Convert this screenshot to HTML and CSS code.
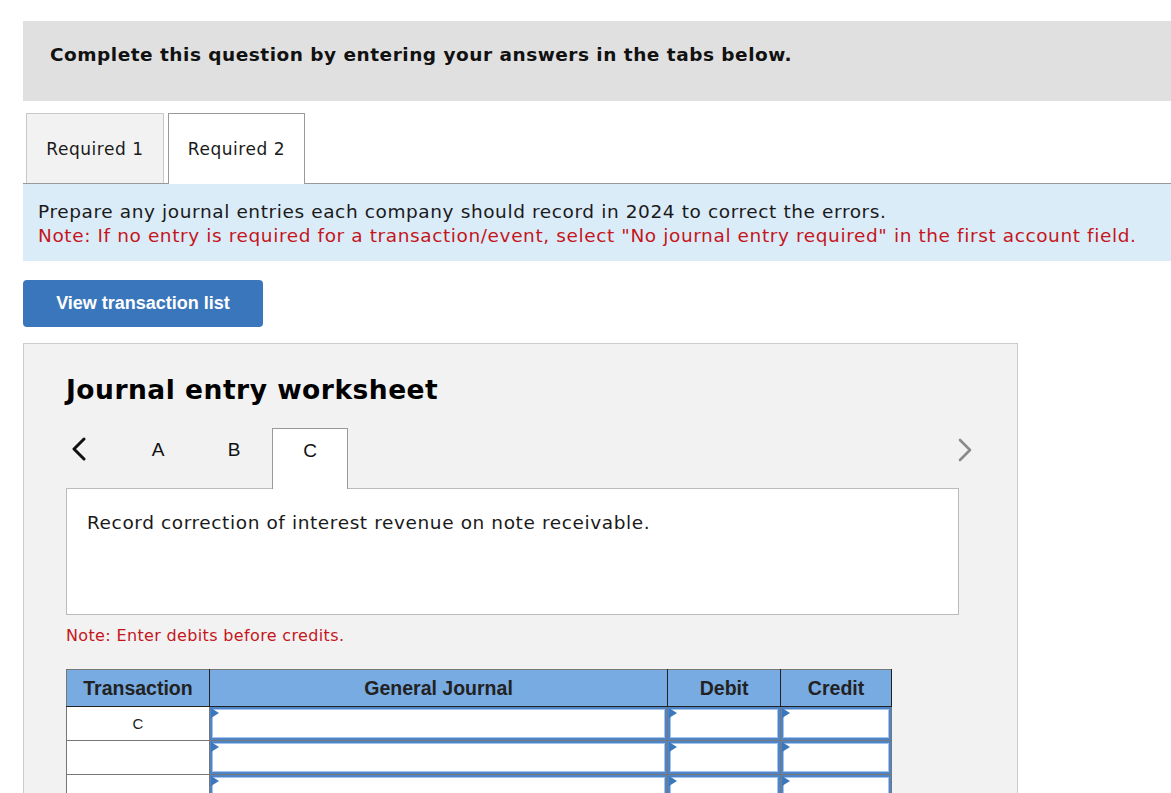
FILE: index.html
```
<!DOCTYPE html>
<html lang="en">
<head>
    <meta charset="UTF-8">
    <title>Journal entry worksheet</title>
    <link rel="stylesheet" href="styles.css">
</head>
<body>
    <div class="page">
        <div class="question-header">Complete this question by entering your answers in the tabs below.</div>

        <div class="req-tabs">
            <div class="req-tab">Required 1</div>
            <div class="req-tab active">Required 2</div>
        </div>

        <div class="instructions">
            <p>Prepare any journal entries each company should record in 2024 to correct the errors.</p>
            <p class="note">Note: If no entry is required for a transaction/event, select "No journal entry required" in the first account field.</p>
        </div>

        <button class="list-button">View transaction list</button>

        <div class="worksheet">
            <h2>Journal entry worksheet</h2>

            <div class="entry-nav">
                <div class="nav-prev">
                    <svg width="15" height="24" viewBox="0 0 15 24"><path d="M13 2 L3 12 L13 22" fill="none" stroke="#111" stroke-width="3" stroke-linecap="round" stroke-linejoin="round"/></svg>
                </div>
                <div class="entry-tab">A</div>
                <div class="entry-tab">B</div>
                <div class="entry-tab active">C</div>
                <div class="nav-next">
                    <svg width="15" height="24" viewBox="0 0 15 24"><path d="M2 2 L12 12 L2 22" fill="none" stroke="#8a8a8a" stroke-width="2.6" stroke-linecap="round" stroke-linejoin="round"/></svg>
                </div>
            </div>

            <div class="entry-box">Record correction of interest revenue on note receivable.</div>

            <p class="debit-note">Note: Enter debits before credits.</p>

            <table class="journal">
                <thead>
                    <tr>
                        <th class="col-trans">Transaction</th>
                        <th class="col-account">General Journal</th>
                        <th class="col-debit">Debit</th>
                        <th class="col-credit">Credit</th>
                    </tr>
                </thead>
                <tbody>
                    <tr>
                        <td class="trans">C</td>
                        <td class="field"><div class="input"></div></td>
                        <td class="field"><div class="input"></div></td>
                        <td class="field"><div class="input"></div></td>
                    </tr>
                    <tr>
                        <td class="trans"></td>
                        <td class="field"><div class="input"></div></td>
                        <td class="field"><div class="input"></div></td>
                        <td class="field"><div class="input"></div></td>
                    </tr>
                    <tr>
                        <td class="trans"></td>
                        <td class="field"><div class="input"></div></td>
                        <td class="field"><div class="input"></div></td>
                        <td class="field"><div class="input"></div></td>
                    </tr>
                    <tr>
                        <td class="trans"></td>
                        <td class="field"><div class="input"></div></td>
                        <td class="field"><div class="input"></div></td>
                        <td class="field"><div class="input"></div></td>
                    </tr>
                </tbody>
            </table>
        </div>
    </div>
</body>
</html>
```

FILE: styles.css
```
* {
    margin: 0;
    padding: 0;
    box-sizing: border-box;
}

body {
    font-family: 'DejaVu Sans', Verdana, sans-serif;
    color: #1a1a1a;
    background-color: white;
    overflow: hidden;
}

.page {
    padding: 21px 0 0 23px;
}

.question-header {
    height: 80px;
    padding: 23px 27px 0;
    background-color: #e0e0e0;
    font-size: 18.5px;
    font-weight: bold;
    letter-spacing: 0.5px;
    line-height: 22px;
    color: #111;
}

.req-tabs {
    display: flex;
    gap: 4px;
    margin-top: 12px;
    padding-left: 3px;
    height: 71px;
    border-bottom: 1px solid #999;
}

.req-tab {
    width: 138px;
    height: 70px;
    display: flex;
    align-items: center;
    justify-content: center;
    background-color: #f2f2f2;
    border: 1px solid #c8c8c8;
    border-bottom: none;
    font-size: 17px;
    letter-spacing: 0.55px;
}

.req-tab.active {
    width: 137px;
    height: 71px;
    background-color: white;
    border-color: #999;
}

.instructions {
    background-color: #dbecf9;
    padding: 16px 15px 13px;
    font-size: 18.5px;
    letter-spacing: 0.6px;
    line-height: 24px;
}

.instructions .note {
    color: #c4161c;
}

.list-button {
    display: block;
    margin-top: 19px;
    width: 240px;
    height: 47px;
    background-color: #3a76bb;
    color: white;
    border: none;
    border-radius: 4px;
    font-family: 'Liberation Sans', Arial, sans-serif;
    font-size: 18px;
    font-weight: bold;
}

.worksheet {
    margin-top: 16px;
    width: 995px;
    padding: 30px 42px 40px;
    background-color: #f2f2f2;
    border: 1px solid #ccc;
}

.worksheet h2 {
    font-size: 26.5px;
    letter-spacing: 0.5px;
    line-height: 32px;
    color: #000;
}

.entry-nav {
    display: flex;
    align-items: flex-start;
    margin-top: 22px;
    height: 60px;
}

.nav-prev {
    width: 54px;
    height: 60px;
    padding: 9px 0 0 5px;
}

.entry-tab {
    width: 76px;
    height: 60px;
    padding-top: 11px;
    text-align: center;
    font-family: 'Liberation Sans', Arial, sans-serif;
    font-size: 19px;
    line-height: 22px;
    color: #111;
}

.entry-tab.active {
    height: 61px;
    margin-bottom: -1px;
    background-color: white;
    border: 1px solid #999;
    border-bottom: none;
    position: relative;
    z-index: 1;
}

.nav-next {
    margin-left: auto;
    padding: 10px 2px 0 0;
}

.entry-box {
    width: 893px;
    height: 127px;
    padding: 22px 20px 0;
    background-color: white;
    border: 1px solid #bbb;
    font-size: 18.5px;
    letter-spacing: 0.6px;
    line-height: 24px;
}

.debit-note {
    margin-top: 11px;
    font-size: 16px;
    letter-spacing: 0.35px;
    line-height: 20px;
    color: #c4161c;
}

.journal {
    margin-top: 23px;
    border-collapse: collapse;
    width: 826px;
    font-family: 'Liberation Sans', Arial, sans-serif;
}

.journal th {
    height: 37px;
    background-color: #78abe2;
    border: 1px solid #222;
    border-top-color: #777;
    font-size: 19.5px;
    font-weight: bold;
    color: #222;
}

.journal th:first-child {
    border-left-color: #777;
}

.col-trans {
    width: 143px;
}

.col-account {
    width: 459px;
}

.col-debit {
    width: 113px;
}

.col-credit {
    width: 111px;
}

.journal td {
    height: 34px;
    border: 1px solid #777;
    background-color: white;
}

.journal td.trans {
    text-align: center;
    font-size: 15px;
    color: #222;
}

.journal td.field {
    padding: 0;
    background-color: #777;
}

.input {
    position: relative;
    height: 33px;
    background-color: white;
    border: 2px solid #4f84c6;
    box-shadow: inset 0 0 0 1px #a3c4ec;
}

.input::before {
    content: '';
    position: absolute;
    top: -1px;
    left: -1px;
    border-left: 8px solid #3a77bd;
    border-top: 5px solid transparent;
    border-bottom: 5px solid transparent;
}
```
